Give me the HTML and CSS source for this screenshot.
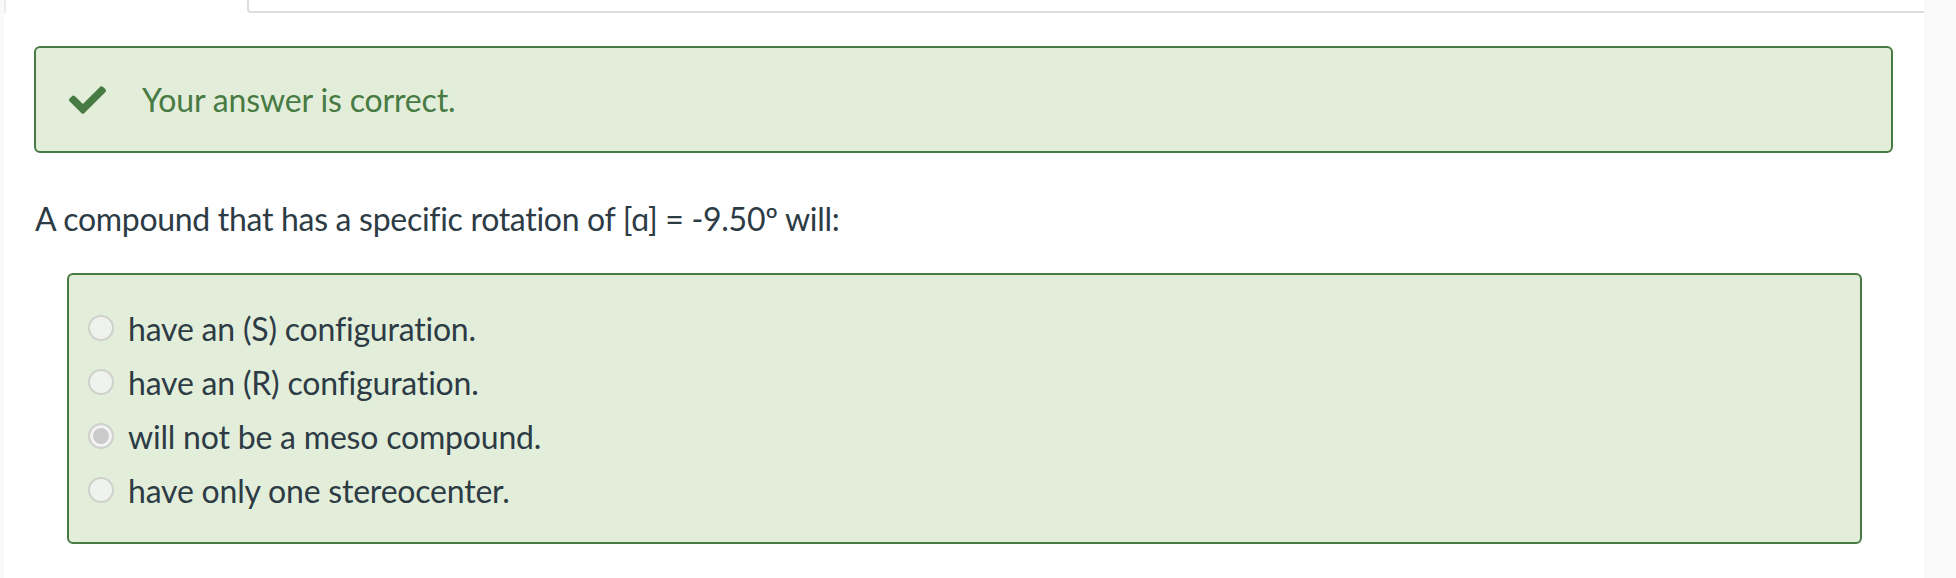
FILE: index.html
```html
<!DOCTYPE html>
<html lang="en">
<head>
<meta charset="utf-8">
<title>Quiz question</title>
<link rel="stylesheet" href="styles.css">
</head>
<body>
<div class="page">
  <div class="tabs">
    <div class="tab-active"></div>
    <div class="tab-rest"></div>
  </div>
  <div class="alert">
    <svg class="check" viewBox="0 64 512 384" aria-hidden="true"><path fill="#487a43" d="M173.898 439.404l-166.4-166.4c-9.997-9.997-9.997-26.206 0-36.204l36.203-36.204c9.997-9.998 26.207-9.998 36.204 0L192 312.69 432.095 72.596c9.997-9.997 26.207-9.997 36.204 0l36.203 36.204c9.997 9.997 9.997 26.206 0 36.204l-294.4 294.401c-9.998 9.997-26.207 9.997-36.204-.001z"/></svg>
    <span class="alert-text">Your answer is correct.</span>
  </div>
  <p class="question">A compound that has a specific rotation of [ɑ] = -9.50º will:</p>
  <div class="answers">
    <label class="answer"><span class="radio"></span><span>have an (S) configuration.</span></label>
    <label class="answer"><span class="radio"></span><span>have an (R) configuration.</span></label>
    <label class="answer"><span class="radio checked"></span><span>will not be a meso compound.</span></label>
    <label class="answer"><span class="radio"></span><span>have only one stereocenter.</span></label>
  </div>
</div>
</body>
</html>
```
FILE: styles.css
```css
html, body {
  margin: 0;
  padding: 0;
  background: #f9f9f9;
  font-family: Lato, "Noto Sans", sans-serif;
  color: #2d3b45;
}
.page {
  margin-left: 4px;
  width: 1920px;
  height: 578px;
  background: #ffffff;
  box-sizing: border-box;
}
.tabs {
  display: flex;
  height: 13px;
}
.tab-active {
  width: 243px;
  border-left: 2px solid #ececec;
  box-sizing: border-box;
}
.tab-rest {
  flex: 1;
  border-left: 2px solid #dcdcdc;
  border-bottom: 2px solid #dcdcdc;
  border-bottom-left-radius: 4px;
  box-sizing: border-box;
}
.alert {
  margin: 33px 31px 0 30px;
  height: 107px;
  box-sizing: border-box;
  border: 2px solid #487a43;
  border-radius: 6px;
  background: #e2eeda;
  display: flex;
  align-items: center;
  padding-left: 33px;
}
.check {
  width: 37px;
  height: 28px;
  flex: none;
}
.alert-text {
  margin-left: 36px;
  font-size: 32px;
  letter-spacing: -0.15px;
  color: #487a43;
}
.question {
  margin: 0;
  padding: 48px 0 0 31px;
  font-size: 32px;
  line-height: 36px;
  letter-spacing: -0.3px;
}
.answers {
  margin: 36px 62px 0 63px;
  height: 271px;
  box-sizing: border-box;
  border: 2px solid #487a43;
  border-radius: 6px;
  background: #e2eeda;
  padding: 26px 0 0 19px;
  display: flex;
  flex-direction: column;
}
.answer {
  display: flex;
  align-items: center;
  height: 54px;
  font-size: 32px;
  letter-spacing: -0.2px;
}
.radio {
  width: 26px;
  height: 26px;
  box-sizing: border-box;
  border: 2px solid #cfd2cc;
  border-radius: 50%;
  background: #eff2ed;
  margin-right: 14px;
  flex: none;
}
.radio.checked {
  background: #cbcbcb;
  box-shadow: inset 0 0 0 3px #f3f3f3;
}
```
